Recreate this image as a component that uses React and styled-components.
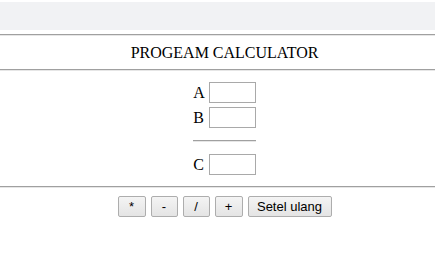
import React from "react";
import styled, { createGlobalStyle } from "styled-components";

const Global = createGlobalStyle`
  html, body { margin: 0; padding: 0; background: #ffffff; }
  body { font-family: "Liberation Serif", "Times New Roman", serif; color: #000; }
`;

const Page = styled.div`
  display: flex;
  flex-direction: column;
  padding-top: 2px;
`;

const TopBar = styled.div`
  height: 28px;
  background: #f1f2f4;
`;

const Rule = styled.div`
  height: 0;
  border-top: 1px solid #a0a0a0;
  border-bottom: 1px solid #e6e6e6;
  margin-top: ${(p) => p.$mt || 0}px;
`;

const Centered = styled.div`
  padding-left: 14px;
  display: flex;
  flex-direction: column;
  align-items: center;
`;

const Title = styled.h1`
  margin: 0;
  font-size: 16px;
  font-weight: normal;
  line-height: 33px;
  text-align: center;
`;

const Form = styled.div`
  display: grid;
  grid-template-columns: auto 47px;
  column-gap: 4px;
  row-gap: 4px;
  align-items: center;
  padding: 11px 0 11px;
`;

const Label = styled.span`
  font-size: 16px;
  line-height: 21px;
`;

const Field = styled.input`
  box-sizing: border-box;
  width: 47px;
  height: 21px;
  margin: 0;
  padding: 1px 2px;
  border: 1px solid #a9a9a9;
  background: #fff;
  font-size: 13px;
`;

const Divider = styled.div`
  grid-column: 1 / -1;
  height: 0;
  border-top: 1px solid #a0a0a0;
  border-bottom: 1px solid #e6e6e6;
  margin: ${(p) => p.$my};
`;

const Buttons = styled.div`
  display: flex;
  gap: 5px;
  padding-top: 8px;
`;

const Btn = styled.button`
  box-sizing: border-box;
  width: ${(p) => p.$w}px;
  height: 21px;
  margin: 0;
  padding: 0;
  font-family: "Liberation Sans", Arial, sans-serif;
  font-size: 13px;
  color: #000;
  border: 1px solid #adadad;
  border-radius: 2px;
  background: linear-gradient(#f4f4f4, #e4e4e4);
`;

export default function App() {
  return (
    <Page>
      <Global />
      <TopBar />
      <Rule $mt={4} />
      <Centered>
        <Title>PROGEAM CALCULATOR</Title>
      </Centered>
      <Rule />
      <Centered>
        <Form>
          <Label>A</Label>
          <Field type="text" />
          <Label>B</Label>
          <Field type="text" />
          <Divider $my="8px 0 8px" />
          <Label>C</Label>
          <Field type="text" />
        </Form>
      </Centered>
      <Rule />
      <Centered>
        <Buttons>
          <Btn $w={28}>*</Btn>
          <Btn $w={27}>-</Btn>
          <Btn $w={27}>/</Btn>
          <Btn $w={28}>+</Btn>
          <Btn $w={84}>Setel ulang</Btn>
        </Buttons>
      </Centered>
    </Page>
  );
}
